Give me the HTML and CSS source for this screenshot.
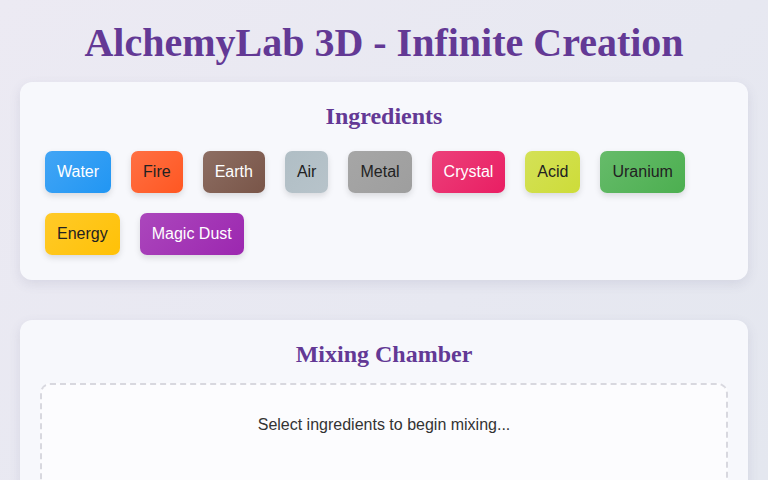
FILE: index.html
```html
<!DOCTYPE html>
<html lang="en">
<head>
<meta charset="utf-8">
<title>AlchemyLab 3D</title>
<link rel="stylesheet" href="styles.css">
</head>
<body>
<h1 class="title">AlchemyLab 3D - Infinite Creation</h1>
<section class="card">
  <h2 class="card-title">Ingredients</h2>
  <div class="ingredients">
    <button class="ing water">Water</button>
    <button class="ing fire">Fire</button>
    <button class="ing earth">Earth</button>
    <button class="ing air">Air</button>
    <button class="ing metal">Metal</button>
    <button class="ing crystal">Crystal</button>
    <button class="ing acid">Acid</button>
    <button class="ing uranium">Uranium</button>
    <button class="ing energy">Energy</button>
    <button class="ing magic">Magic Dust</button>
  </div>
</section>
<section class="card">
  <h2 class="card-title">Mixing Chamber</h2>
  <div class="chamber">
    <p class="chamber-text">Select ingredients to begin mixing...</p>
  </div>
</section>
</body>
</html>
```
FILE: styles.css
```css
html, body { height: 100%; }
body {
  margin: 0;
  padding: 20px;
  box-sizing: border-box;
  font-family: "Liberation Sans", Arial, sans-serif;
  background: linear-gradient(135deg, #eceaf3 0%, #e7e8f1 60%, #e4e7ef 100%);
  color: #333;
  overflow: hidden;
}
.title {
  margin: 0 0 16px;
  text-align: center;
  font-family: "Liberation Serif", "Times New Roman", serif;
  font-weight: bold;
  font-size: 40px;
  line-height: 46px;
  color: #633995;
}
.card {
  background: #f7f8fc;
  border-radius: 12px;
  padding: 20px;
  margin-bottom: 40px;
  box-shadow: 0 4px 12px rgba(80, 80, 120, 0.12);
}
.card-title {
  margin: 0 0 15px;
  text-align: center;
  font-family: "Liberation Serif", "Times New Roman", serif;
  font-weight: bold;
  font-size: 24px;
  line-height: 28px;
  color: #633995;
}
.ingredients {
  display: flex;
  flex-wrap: wrap;
  gap: 10px;
  padding-top: 1px;
}
.ing {
  margin: 5px;
  padding: 12px;
  border: none;
  border-radius: 7px;
  font-family: "Liberation Sans", Arial, sans-serif;
  font-size: 16px;
  line-height: 18px;
  color: #222;
  box-shadow: 0 3px 6px rgba(0, 0, 0, 0.12);
}
.water { background: linear-gradient(135deg, #42a5f5, #2196f3); color: #fff; }
.fire { background: linear-gradient(135deg, #ff7043, #ff5722); }
.earth { background: linear-gradient(135deg, #8d6e63, #795548); color: #fff; }
.air { background: linear-gradient(135deg, #b0bec5, #b7c3ca); }
.metal { background: linear-gradient(135deg, #a6a6a6, #9e9e9e); }
.crystal { background: linear-gradient(135deg, #ec407a, #e91e63); color: #fff; }
.acid { background: linear-gradient(135deg, #d4e157, #cddc39); }
.uranium { background: linear-gradient(135deg, #66bb6a, #4caf50); }
.energy { background: linear-gradient(135deg, #ffca28, #ffc107); }
.magic { background: linear-gradient(135deg, #ab47bc, #9c27b0); color: #fff; }
.chamber {
  border: 2px dashed #d8d8df;
  border-radius: 10px;
  background: #fcfcfe;
  min-height: 200px;
  padding: 31px 20px 30px;
}
.chamber-text {
  margin: 0;
  text-align: center;
  font-size: 16px;
  line-height: 18px;
  color: #333;
}
```
